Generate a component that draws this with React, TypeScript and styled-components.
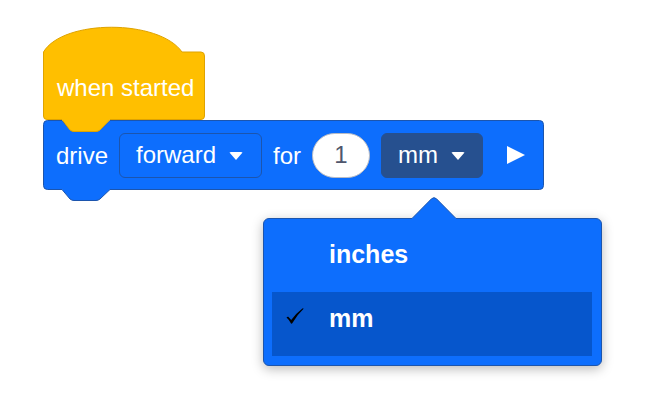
import React from 'react';
import styled, { createGlobalStyle } from 'styled-components';

const GlobalStyle = createGlobalStyle`
    html, body {
        margin: 0;
        padding: 0;
        background: #ffffff;
    }
    body {
        font-family: "Liberation Sans", Arial, Helvetica, sans-serif;
    }
`;

const BLUE = "#0d6efd";
const BLUE_EDGE = "#1c55ad";

const Workspace = styled.div`
    width: 670px;
    height: 406px;
    box-sizing: border-box;
    padding: 27px 0 0 43px;
    display: flex;
    flex-direction: column;
    align-items: flex-start;
`;

const Hat = styled.div`
    position: relative;
    width: 162px;
    height: 93px;
    display: flex;
    align-items: flex-end;
    z-index: 1;
    > svg{
        position: absolute;
        left: 0;
        top: 0;
        overflow: visible;
    }
    > span{
        position: relative;
        height: 68px;
        padding-top: 3px;
        box-sizing: border-box;
        display: flex;
        align-items: center;
        padding-left: 14px;
        color: #ffffff;
        font-size: 24px;
    }
`;

const Stack = styled.div`
    position: relative;
    width: 501px;
    height: 70px;
    box-sizing: border-box;
    padding-left: 13px;
    display: flex;
    align-items: center;
    gap: 11px;
    color: #ffffff;
    font-size: 24px;
    > svg{
        position: absolute;
        left: 0;
        top: 0;
        overflow: visible;
    }
    > *:not(svg){
        position: relative;
    }
`;

const Label = styled.span`
    padding-top: 1px;
`;

const Dropdown = styled.div<{ $active?: boolean; $width: number }>`
    width: ${ props => props.$width}px;
    height: 45px;
    box-sizing: border-box;
    display: flex;
    align-items: center;
    gap: 13px;
    padding-left: 16px;
    border-radius: 6px;
    border: 1px solid ${ props => props.$active ? "#26508f" : BLUE_EDGE};
    background: ${ props => props.$active ? "#26508f" : BLUE};
    color: #ffffff;
`;

const Caret = styled.span`
    width: 0;
    height: 0;
    border-left: 7px solid transparent;
    border-right: 7px solid transparent;
    border-top: 8px solid #ffffff;
    border-radius: 2px;
    margin-top: 1px;
`;

const NumberInput = styled.div`
    width: 58px;
    height: 45px;
    box-sizing: border-box;
    border-radius: 23px;
    border: 1px solid #b9bcc4;
    background: #ffffff;
    color: #4f566c;
    display: flex;
    align-items: center;
    justify-content: center;
`;

const Play = styled.span`
    width: 0;
    height: 0;
    margin-left: 13px;
    border-top: 9px solid transparent;
    border-bottom: 9px solid transparent;
    border-left: 18px solid #ffffff;
`;

const MenuWrap = styled.div`
    position: relative;
    margin: 28px 0 0 220px;
`;

const Arrow = styled.svg`
    position: absolute;
    left: 149px;
    top: -21px;
    overflow: visible;
`;

const Menu = styled.div`
    width: 339px;
    height: 148px;
    box-sizing: border-box;
    padding: 9px 9px 9px 8px;
    background: ${BLUE};
    border: 1px solid ${BLUE_EDGE};
    border-radius: 6px;
    box-shadow: 0 3px 12px rgba(0, 0, 0, 0.28);
    display: flex;
    flex-direction: column;
`;

const Item = styled.div<{ $selected?: boolean }>`
    height: 64px;
    box-sizing: border-box;
    padding-top: 14px;
    display: flex;
    align-items: flex-start;
    background: ${ props => props.$selected ? "#0656cc" : "transparent"};
    color: #ffffff;
    font-size: 25px;
    font-weight: bold;
    line-height: 25px;
`;

const CheckSlot = styled.span`
    width: 57px;
    height: 25px;
    box-sizing: border-box;
    padding: 2px 0 0 14px;
    > svg{
        display: block;
    }
`;

const Check: React.FC = () => (
    <svg width="18" height="16" viewBox="0 0 18 16">
        <path
            d="M0.5,9.4 Q1.4,8.4 2.3,8.7 L5.2,12 Q10,5.2 16.4,0.4 Q17.4,0 17.6,0.7 Q11.4,6.4 6.6,14.8 Q6,15.8 5,15.6 Q3.6,12 0.5,9.4 Z"
            fill="#000000"/>
    </svg>
);

const App: React.FC = () => {
    return (
    <Workspace>
        <GlobalStyle />
        <Hat>
            <svg width="162" height="104" viewBox="0 0 162 104">
                <path
                    d="M0.5,25 C20,-8 116,-8 139,25 L158,25 Q161.5,25 161.5,29 L161.5,89 Q161.5,92.5 158,92.5 L67,92.5 L57,103 Q55,104.5 53,104.5 L31,104.5 Q29,104.5 27,103 L19,92.5 L4,92.5 Q0.5,92.5 0.5,89 Z"
                    fill="#ffbf00"
                    stroke="#dfa300"
                    strokeWidth="1"/>
            </svg>
            <span>when started</span>
        </Hat>
        <Stack>
            <svg width="501" height="81" viewBox="0 0 501 81">
                <path
                    d="M0.5,4.5 Q0.5,0.5 4.5,0.5 L19,0.5 L27,10 Q29,11.5 31,11.5 L53,11.5 Q55,11.5 57,10 L67,0.5 L496.5,0.5 Q500.5,0.5 500.5,4.5 L500.5,65.5 Q500.5,69.5 496.5,69.5 L67,69.5 L57,79 Q55,80.5 53,80.5 L31,80.5 Q29,80.5 27,79 L19,69.5 L4.5,69.5 Q0.5,69.5 0.5,65.5 Z"
                    fill={BLUE}
                    stroke={BLUE_EDGE}
                    strokeWidth="1"/>
            </svg>
            <Label>drive</Label>
            <Dropdown $width={143}>
                <span>forward</span>
                <Caret />
            </Dropdown>
            <Label>for</Label>
            <NumberInput>1</NumberInput>
            <Dropdown $active $width={102}>
                <span>mm</span>
                <Caret />
            </Dropdown>
            <Play />
        </Stack>
        <MenuWrap>
            <Arrow width="44" height="22" viewBox="0 0 44 22">
                <path d="M0,21.5 L19.5,1.8 Q22,-0.5 24.5,1.8 L44,21.5" fill={BLUE} stroke={BLUE_EDGE} strokeWidth="1"/>
                <rect x="0" y="21" width="44" height="3" fill={BLUE}/>
            </Arrow>
            <Menu>
                <Item>
                    <CheckSlot />
                    <span>inches</span>
                </Item>
                <Item $selected>
                    <CheckSlot><Check /></CheckSlot>
                    <span>mm</span>
                </Item>
            </Menu>
        </MenuWrap>
    </Workspace>
  );
};

export default App;
